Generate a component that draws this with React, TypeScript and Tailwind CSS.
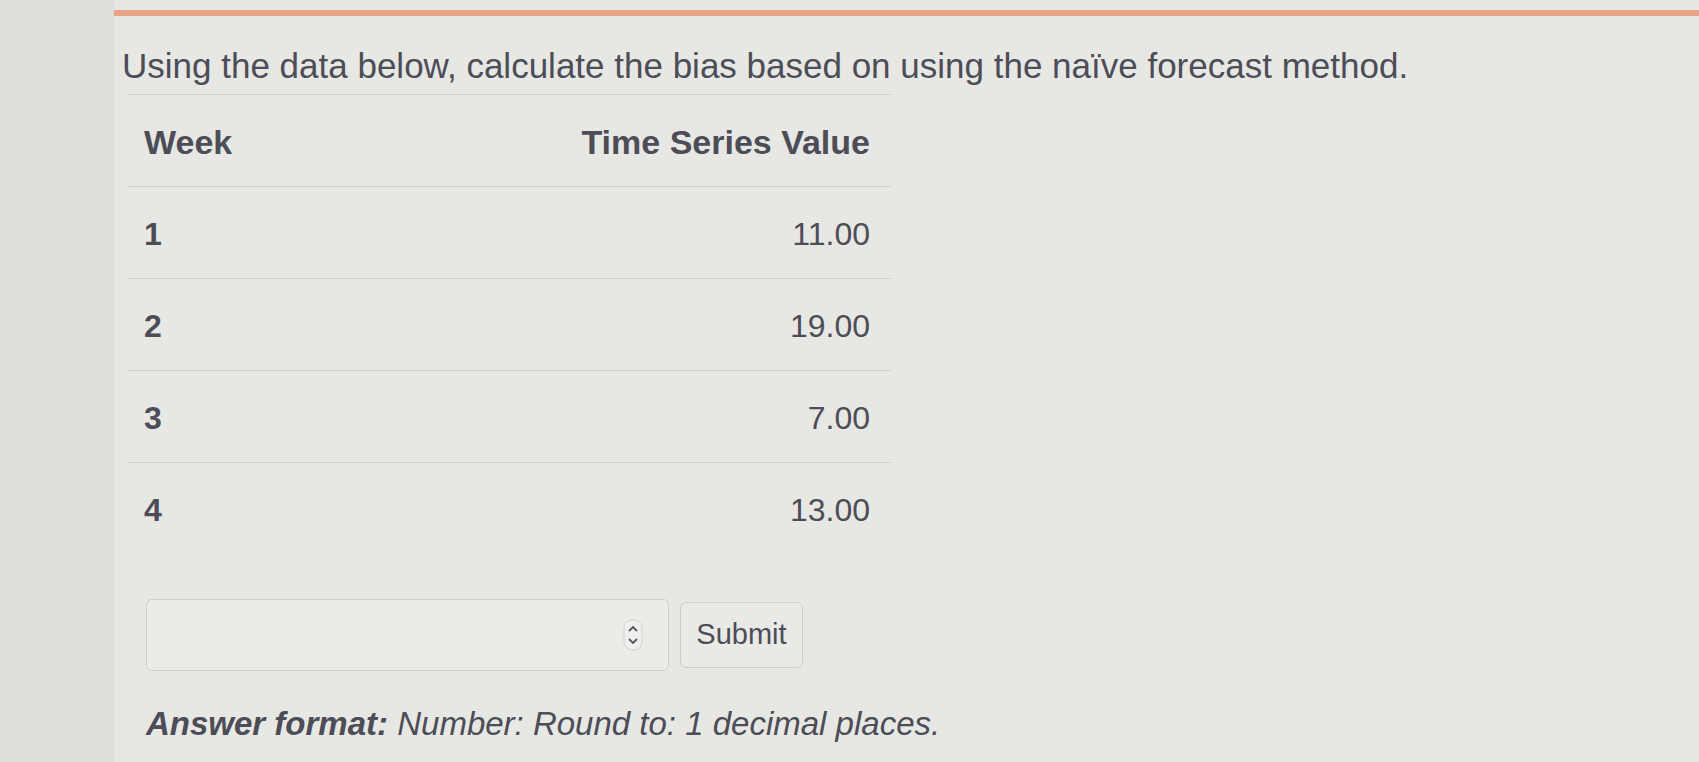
import { useState } from "react";

// Question card: naïve forecast bias prompt, data table, numeric answer + submit.

const ROWS = [
  { week: 1, value: "11.00" },
  { week: 2, value: "19.00" },
  { week: 3, value: "7.00" },
  { week: 4, value: "13.00" },
];

const FONT = "font-['Liberation_Sans',Arial,sans-serif]";

function Spinner() {
  return (
    <svg width="20" height="32" viewBox="0 0 20 32" aria-hidden="true" className="shrink-0">
      <rect x="1" y="1" width="18" height="30" rx="8" fill="#efefed" stroke="#d3d3d1" />
      <path d="M6 12 L10 8 L14 12" fill="none" stroke="#55565e" strokeWidth="1.8" />
      <path d="M6 20 L10 24 L14 20" fill="none" stroke="#55565e" strokeWidth="1.8" />
    </svg>
  );
}

export default function App() {
  const [answer, setAnswer] = useState("");
  return (
    <div className={`flex h-[762px] w-full overflow-hidden bg-[#e6e6e3] text-[#4c4d57] ${FONT}`}>
      <div className="w-[114px] shrink-0 bg-[#dededb]" />
      <main className="flex min-w-0 flex-1 flex-col bg-[#e7e7e4]">
        <div className="mt-[10px] h-[6px] w-full bg-[#e9a385]" />
        <h1 className="mt-[29px] pl-[8px] text-[35px] leading-[42px] whitespace-nowrap">
          Using the data below, calculate the bias based on using the naïve forecast method.
        </h1>

        <table className="mt-[7px] ml-[14px] w-[763px] border-collapse border-t border-[#cfcfcc]">
          <thead>
            <tr className="h-[92px] border-b border-[#cfcfcc]">
              <th className="pt-[4px] pl-[16px] text-left text-[34px] font-bold">Week</th>
              <th className="pt-[4px] pr-[21px] text-right text-[34px] font-bold">
                Time Series Value
              </th>
            </tr>
          </thead>
          <tbody>
            {ROWS.map((row, i) => (
              <tr
                key={row.week}
                className={i < ROWS.length - 1 ? "h-[92px] border-b border-[#cfcfcc]" : "h-[92px]"}
              >
                <td className="pt-[3px] pl-[16px] text-left text-[32px] font-bold">{row.week}</td>
                <td className="pt-[3px] pr-[21px] text-right text-[32px]">{row.value}</td>
              </tr>
            ))}
          </tbody>
        </table>

        <div className="mt-[44px] ml-[32px] flex items-center gap-[11px]">
          <div className="flex h-[72px] w-[523px] items-center rounded-[6px] border border-[#cdcdca] bg-[#ebebe8] pr-[25px]">
            <input
              type="text"
              value={answer}
              onChange={(e) => setAnswer(e.target.value)}
              className="min-w-0 flex-1 bg-transparent px-4 text-[28px] outline-none"
            />
            <Spinner />
          </div>
          <button className="h-[66px] w-[123px] rounded-[6px] border border-[#cdcdca] bg-[#e9e9e6] text-[29px] text-[#4c4d57]">
            Submit
          </button>
        </div>

        <p className="mt-[33px] ml-[32px] text-[33px] leading-[40px] whitespace-nowrap italic">
          <span className="font-bold">Answer format:</span> Number: Round to: 1 decimal places.
        </p>
      </main>
    </div>
  );
}
